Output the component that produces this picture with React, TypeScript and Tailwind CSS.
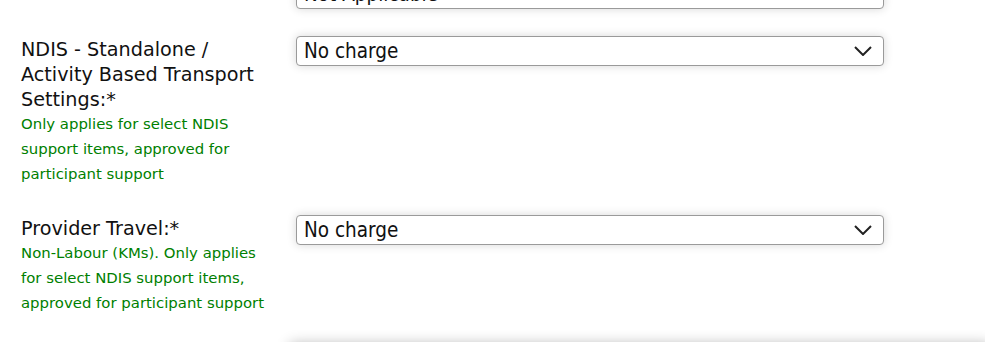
import React from "react";

const Chevron = () => (
  <svg width="18" height="10" viewBox="0 0 18 10" fill="none" className="shrink-0">
    <path d="M1 1 L9 9 L17 1" stroke="#222" strokeWidth="2" />
  </svg>
);

const Select = ({ value }: { value: string }) => (
  <div className="flex h-[30px] w-[588px] items-center justify-between rounded-[4px] border border-[#9a9a9a] bg-white pl-[7px] pr-[11px] shadow-[0_0_10px_rgba(0,0,0,0.16)]">
    <span className="text-[20.5px] leading-none text-[#111]" style={{ fontFamily: '"DejaVu Sans Condensed", sans-serif' }}>{value}</span>
    <Chevron />
  </div>
);

export default function App() {
  return (
    <div
      className="relative h-[342px] w-[985px] overflow-hidden bg-white"
      style={{ fontFamily: '"DejaVu Sans", sans-serif' }}
    >
      <div className="flex flex-col pl-[21px]">
        <div className="-mt-[21px] flex">
          <div className="w-[275px]" />
          <Select value="Not Applicable" />
        </div>
        <div className="mt-[27px] flex">
          <div className="w-[275px]">
            <div className="pt-px text-[19.2px] leading-[25px] text-[#111]">
              NDIS - Standalone /<br />Activity Based Transport<br />Settings:*
            </div>
            <div className="text-[14.9px] leading-[25px] text-[#008000]">
              Only applies for select NDIS<br />support items, approved for<br />participant support
            </div>
          </div>
          <Select value="No charge" />
        </div>
        <div className="mt-[28px] flex">
          <div className="w-[275px]">
            <div className="pt-px text-[19.2px] leading-[25px] text-[#111]">Provider Travel:*</div>
            <div className="text-[14.9px] leading-[25px] text-[#008000]">
              Non-Labour (KMs). Only applies<br />for select NDIS support items,<br />approved for participant support
            </div>
          </div>
          <Select value="No charge" />
        </div>
      </div>
      <div className="ml-[290px] mt-[28px] h-[40px] w-[700px] bg-white shadow-[0_0_14px_rgba(0,0,0,0.3)]" />
    </div>
  );
}
